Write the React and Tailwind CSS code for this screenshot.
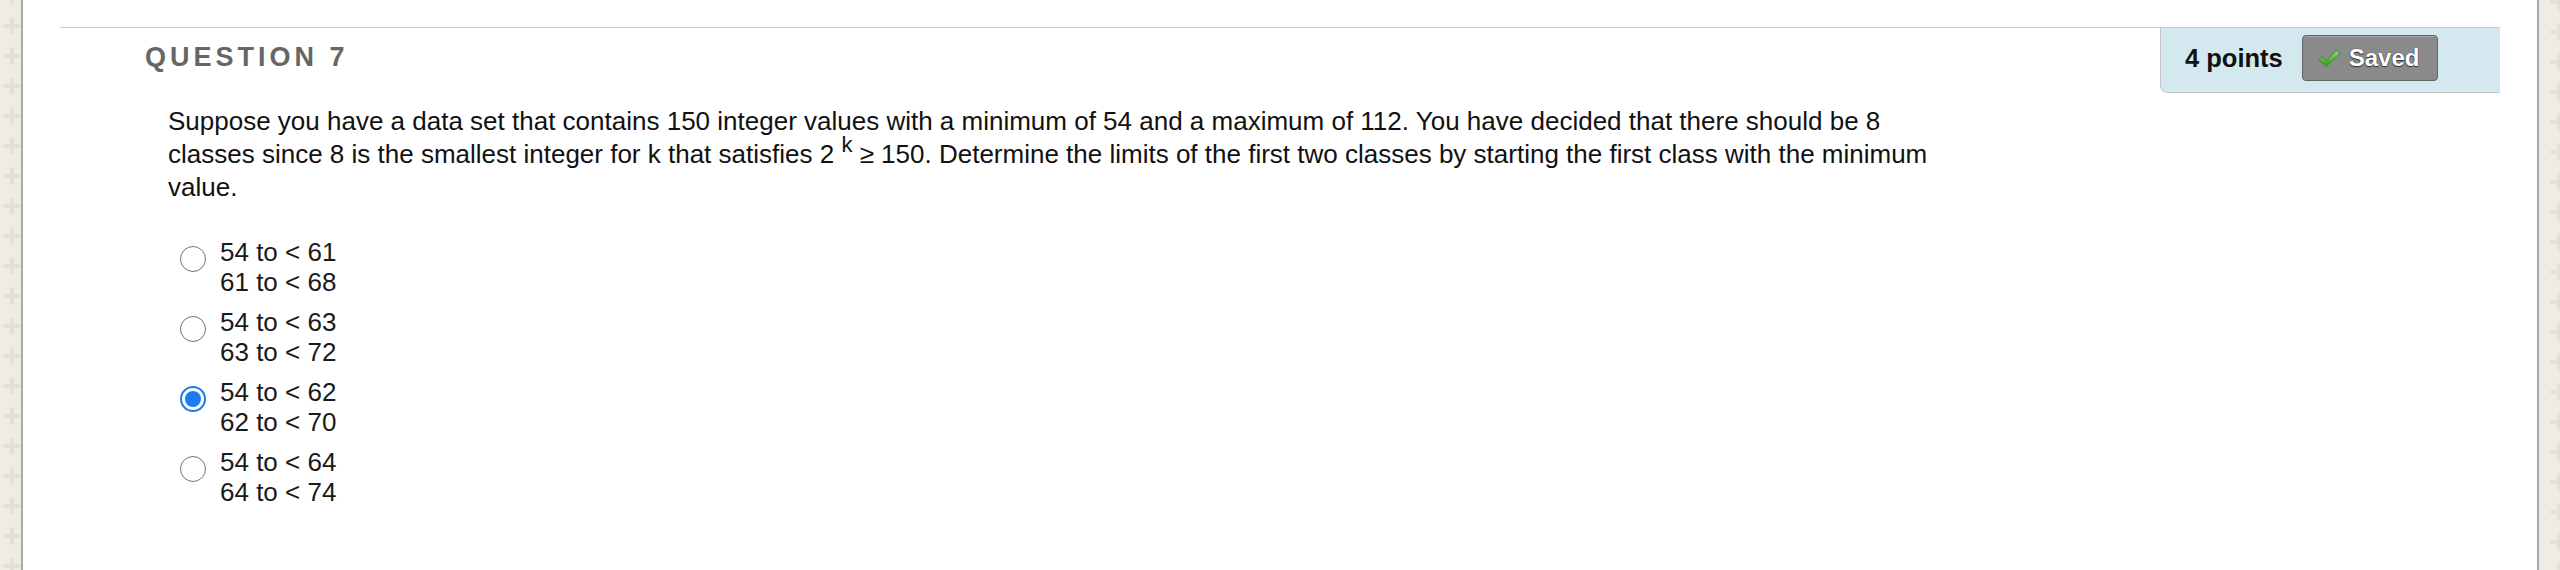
import React from 'react';

const options = [
  ['54 to < 61', '61 to < 68'],
  ['54 to < 63', '63 to < 72'],
  ['54 to < 62', '62 to < 70'],
  ['54 to < 64', '64 to < 74'],
];

function Crosses({ offset = 26, cx = 12 }) {
  return (
    <svg className="absolute inset-0 h-full w-full" aria-hidden="true">
      <defs>
        <pattern id={`cross-${offset}-${cx}`} width="24" height="30" patternUnits="userSpaceOnUse" y={offset - 15}>
          <path d={`M${cx - 7} 15h14M${cx} 8v14`} stroke="#e2e0d8" strokeWidth="4" strokeLinecap="round" />
        </pattern>
      </defs>
      <rect width="100%" height="100%" fill={`url(#cross-${offset}-${cx})`} />
    </svg>
  );
}

function Radio({ checked }) {
  if (checked) {
    return (
      <span className="mt-[8px] flex h-[26px] w-[26px] shrink-0 items-center justify-center rounded-full border-2 border-[#1a7bf5] bg-white">
        <span className="h-[16px] w-[16px] rounded-full bg-[#1a7bf5]" />
      </span>
    );
  }
  return <span className="mt-[8px] h-[26px] w-[26px] shrink-0 rounded-full border-[1.5px] border-[#737373] bg-white" />;
}

function Check() {
  return (
    <svg width="24" height="20" viewBox="0 0 24 20" aria-hidden="true">
      <defs>
        <linearGradient id="chk" x1="0" y1="0" x2="0" y2="1">
          <stop offset="0" stopColor="#8be06a" />
          <stop offset="1" stopColor="#2f9a1c" />
        </linearGradient>
      </defs>
      <path d="M1.5 11.5l3.5-3.2 4.3 4.2L19.5 2.5l3.2 3.1L9.3 18.5z" fill="url(#chk)" stroke="#3c7d2b" strokeWidth="0.8" strokeLinejoin="round" />
    </svg>
  );
}

export default function App() {
  return (
    <div className="flex h-[570px] w-[2560px] bg-white font-['Liberation_Sans',Arial,sans-serif] text-[#111]">
      <div className="relative w-[23px] shrink-0 border-r-[2.5px] border-[#a9a9a9] bg-[#eeece5]">
        <Crosses offset={26} cx={12} />
      </div>

      <main className="flex-1 px-[37px] pt-[27px]">
        <div className="flex items-start justify-between border-t-[1.5px] border-[#c9c9c9]">
          <h2 className="pl-[85px] pt-[16px] text-[27px] font-bold leading-[27px] tracking-[4px] text-[#666]">
            QUESTION 7
          </h2>
          <div className="flex h-[65px] w-[340px] items-start rounded-bl-[8px] border-b-[1.5px] border-l-[1.5px] border-[#c4c4c4] bg-[#d4e9ef] pl-[24px] pt-[7px]">
            <div className="flex h-[46px] items-center gap-[19px]">
              <span className="text-[25.5px] font-bold">4 points</span>
              <span className="flex h-[46px] w-[136px] items-center gap-[8px] rounded-[4px] border-[1.5px] border-[#636363] bg-[#8a8a8a] pl-[14px] shadow-[inset_0_1px_0_#a5a5a5]">
                <Check />
                <span className="text-[24px] font-bold text-white [text-shadow:0_0_1px_#222,0_1px_1px_#333]">Saved</span>
              </span>
            </div>
          </div>
        </div>

        <div className="pl-[108px] pt-[12px]">
          <p className="max-w-[1800px] text-[26px] leading-[33px]">
            Suppose you have a data set that contains 150 integer values with a minimum of 54 and a maximum of 112. You have decided that there should be 8 classes since 8 is the smallest integer for k that satisfies 2 <sup className="text-[22px]">k</sup> ≥ 150. Determine the limits of the first two classes by starting the first class with the minimum value.
          </p>

          <ul className="mt-[34px] flex flex-col gap-[11px] pl-[12px]">
            {options.map((o, i) => (
              <li key={i} className="flex gap-[14px]">
                <Radio checked={i === 2} />
                <div className="text-[26px] leading-[29.5px] text-[#1a1a1a]">
                  <div>{o[0]}</div>
                  <div>{o[1]}</div>
                </div>
              </li>
            ))}
          </ul>
        </div>
      </main>

      <div className="relative w-[23px] shrink-0 border-l-[2.5px] border-[#a9a9a9] bg-[#eeece5]">
        <Crosses offset={2} cx={20} />
      </div>
    </div>
  );
}
